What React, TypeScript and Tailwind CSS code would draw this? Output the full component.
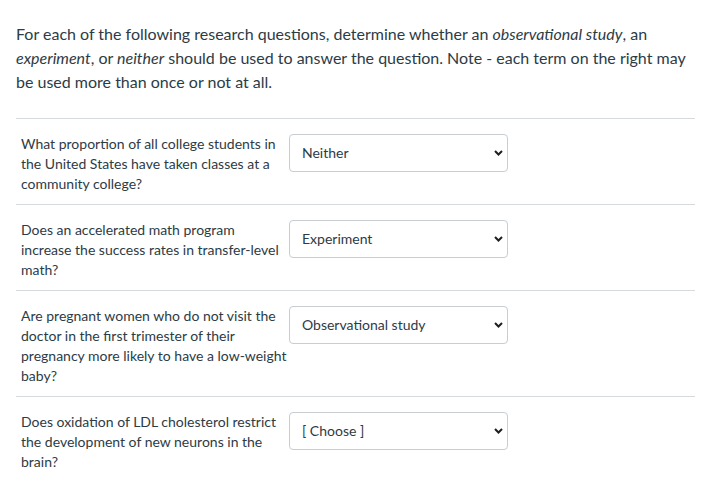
const rows = [
  {
    q: 'What proportion of all college students in the United States have taken classes at a community college?',
    a: 'Neither',
  },
  {
    q: 'Does an accelerated math program increase the success rates in transfer-level math?',
    a: 'Experiment',
  },
  {
    q: 'Are pregnant women who do not visit the doctor in the first trimester of their pregnancy more likely to have a low-weight baby?',
    a: 'Observational study',
  },
  {
    q: 'Does oxidation of LDL cholesterol restrict the development of new neurons in the brain?',
    a: '[ Choose ]',
  },
];

function Select({ value }: { value: string }) {
  return (
    <div className="relative flex h-[38px] w-[219px] shrink-0 items-center rounded-[4px] border border-[#c7cdd1] bg-white pb-[2px] pl-[12px]">
      <span className="text-[14px] text-[#2d3b45]">{value}</span>
      <svg className="absolute right-[4px] top-[15px] h-[6px] w-[9px]" viewBox="0 0 9 6">
        <path d="M1 1 L4.5 4.5 L8 1" fill="none" stroke="#1f1f1f" strokeWidth={2} />
      </svg>
    </div>
  );
}

export default function App() {
  return (
    <div className="min-h-screen bg-white font-['Lato','Noto_Sans',sans-serif] text-[#2d3b45]">
      <div className="px-[16px] pt-[22px]">
        <p className="text-[16px] leading-[24px]">
          For each of the following research questions, determine whether an <em>observational study</em>, an{' '}
          <em>experiment</em>, or <em>neither</em> should be used to answer the question. Note - each term on the right may
          be used more than once or not at all.
        </p>

        <div className="mt-[24px] w-[679px]">
          {rows.map((row, i) => (
            <div key={i} className="flex border-t border-[#d7dadd] pt-[15px] pb-[10px] pl-[5px]">
              <p className="w-[268px] shrink-0 pr-[2px] text-[14px] leading-[20px]">{row.q}</p>
              <Select value={row.a} />
            </div>
          ))}
        </div>
      </div>
    </div>
  );
}
